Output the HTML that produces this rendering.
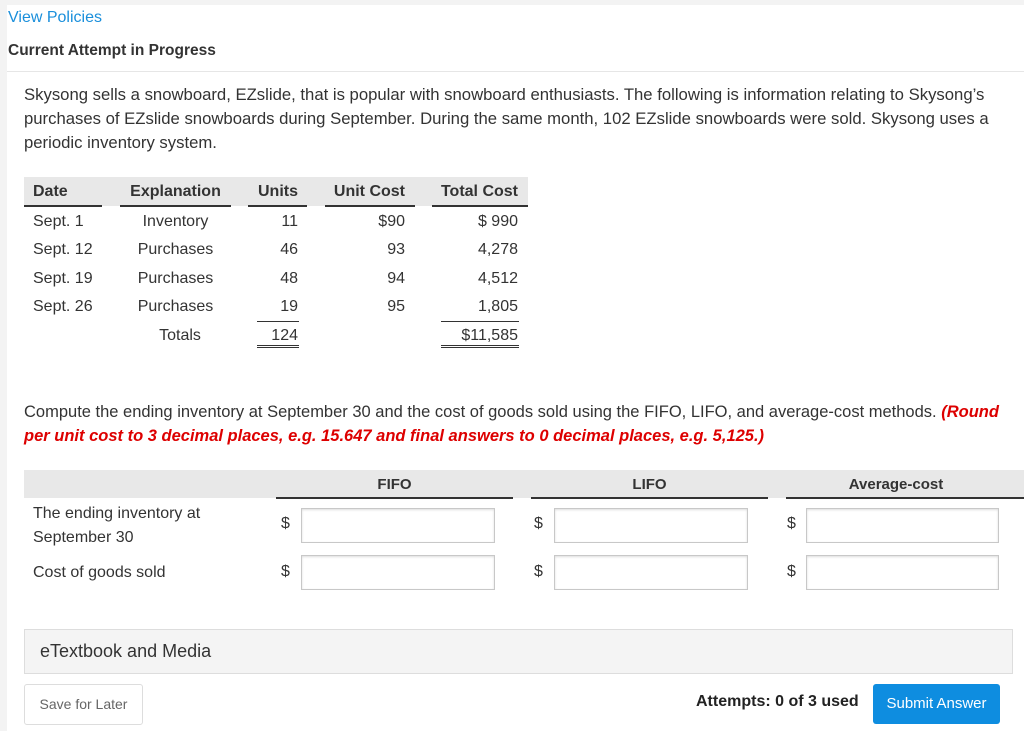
<!DOCTYPE html>
<html><head><style>
body{margin:0;background:#f3f3f3;font-family:"Liberation Sans",sans-serif;color:#333;}
.page{position:absolute;left:7px;top:5px;right:0;bottom:0;background:#fff;}
.a{position:absolute;white-space:nowrap;font-size:16px;}
.th{position:absolute;font-weight:bold;font-size:16px;white-space:nowrap;}
.ul{position:absolute;height:2px;background:#333;}
.inp{position:absolute;width:192px;height:33px;border:1px solid #c8c8c8;background:#fff;box-shadow:inset 0 1px 2px #ddd;}
</style></head><body>
<div class="page"></div>
<div class="a" style="left:8px;top:9px;color:#1a8fdb;">View Policies</div>
<div class="a" style="left:8px;top:42px;font-weight:bold;font-size:15.5px;">Current Attempt in Progress</div>
<div style="position:absolute;left:7px;right:0;top:71px;height:1px;background:#e6e6e6"></div>
<div style="position:absolute;left:24px;top:83px;width:985px;font-size:16.7px;line-height:24px;">Skysong sells a snowboard, EZslide, that is popular with snowboard enthusiasts. The following is information relating to Skysong’s purchases of EZslide snowboards during September. During the same month, 102 EZslide snowboards were sold. Skysong uses a periodic inventory system.</div>

<div style="position:absolute;left:24px;top:177px;width:504px;height:29px;background:#e8e8e8"></div>
<div class="th" style="left:33px;top:183px">Date</div>
<div class="th" style="left:120px;top:183px;width:111px;text-align:center">Explanation</div>
<div class="th" style="left:240px;top:183px;width:58px;text-align:right">Units</div>
<div class="th" style="left:300px;top:183px;width:105px;text-align:right">Unit Cost</div>
<div class="th" style="left:400px;top:183px;width:118px;text-align:right">Total Cost</div>
<div class="ul" style="left:24px;width:78px;top:205px"></div>
<div class="ul" style="left:120px;width:111px;top:205px"></div>
<div class="ul" style="left:248px;width:59px;top:205px"></div>
<div class="ul" style="left:325px;width:90px;top:205px"></div>
<div class="ul" style="left:432px;width:96px;top:205px"></div>

<div class="a" style="left:33px;top:213px">Sept. 1</div><div class="a" style="left:120px;top:213px;width:111px;text-align:center">Inventory</div><div class="a" style="left:240px;top:213px;width:58px;text-align:right">11</div><div class="a" style="left:300px;top:213px;width:105px;text-align:right">$90</div><div class="a" style="left:400px;top:213px;width:118px;text-align:right">$ 990</div>
<div class="a" style="left:33px;top:241px">Sept. 12</div><div class="a" style="left:120px;top:241px;width:111px;text-align:center">Purchases</div><div class="a" style="left:240px;top:241px;width:58px;text-align:right">46</div><div class="a" style="left:300px;top:241px;width:105px;text-align:right">93</div><div class="a" style="left:400px;top:241px;width:118px;text-align:right">4,278</div>
<div class="a" style="left:33px;top:270px">Sept. 19</div><div class="a" style="left:120px;top:270px;width:111px;text-align:center">Purchases</div><div class="a" style="left:240px;top:270px;width:58px;text-align:right">48</div><div class="a" style="left:300px;top:270px;width:105px;text-align:right">94</div><div class="a" style="left:400px;top:270px;width:118px;text-align:right">4,512</div>
<div class="a" style="left:33px;top:298px">Sept. 26</div><div class="a" style="left:120px;top:298px;width:111px;text-align:center">Purchases</div><div class="a" style="left:240px;top:298px;width:58px;text-align:right">19</div><div class="a" style="left:300px;top:298px;width:105px;text-align:right">95</div><div class="a" style="left:400px;top:298px;width:118px;text-align:right">1,805</div>
<div class="ul" style="left:257px;width:42px;top:321px;height:1px"></div>
<div class="ul" style="left:441px;width:78px;top:321px;height:1px"></div>
<div class="a" style="left:105px;top:327px;width:150px;text-align:center">Totals</div><div class="a" style="left:240px;top:327px;width:58px;text-align:right">124</div><div class="a" style="left:400px;top:327px;width:118px;text-align:right">$11,585</div>
<div style="position:absolute;left:257px;width:42px;top:345px;height:1px;border-top:1px solid #333;border-bottom:1px solid #333"></div>
<div style="position:absolute;left:441px;width:78px;top:345px;height:1px;border-top:1px solid #333;border-bottom:1px solid #333"></div>

<div style="position:absolute;left:24px;top:400px;width:990px;font-size:16.5px;line-height:24px;">Compute the ending inventory at September 30 and the cost of goods sold using the FIFO, LIFO, and average-cost methods. <i style="color:#d00;font-weight:bold">(Round per unit cost to 3 decimal places, e.g. 15.647 and final answers to 0 decimal places, e.g. 5,125.)</i></div>

<div style="position:absolute;left:24px;top:470px;right:0;height:28px;background:#e8e8e8"></div>
<div class="th" style="left:276px;width:237px;top:476px;text-align:center;font-size:15px">FIFO</div>
<div class="th" style="left:531px;width:237px;top:476px;text-align:center;font-size:15px">LIFO</div>
<div class="th" style="left:786px;width:220px;top:476px;text-align:center;font-size:15px">Average-cost</div>
<div class="ul" style="left:276px;width:237px;top:497px"></div>
<div class="ul" style="left:531px;width:237px;top:497px"></div>
<div class="ul" style="left:786px;width:238px;top:497px"></div>
<div style="position:absolute;left:33px;top:502px;font-size:16px;line-height:24px">The ending inventory at<br>September 30</div>
<div class="a" style="left:33px;top:564px">Cost of goods sold</div>
<div class="a" style="left:281px;top:515px">$</div><div class="inp" style="left:301px;top:508px"></div>
<div class="a" style="left:534px;top:515px">$</div><div class="inp" style="left:554px;top:508px"></div>
<div class="a" style="left:787px;top:515px">$</div><div class="inp" style="left:806px;top:508px;width:191px"></div>
<div class="a" style="left:281px;top:563px">$</div><div class="inp" style="left:301px;top:555px"></div>
<div class="a" style="left:534px;top:563px">$</div><div class="inp" style="left:554px;top:555px"></div>
<div class="a" style="left:787px;top:563px">$</div><div class="inp" style="left:806px;top:555px;width:191px"></div>

<div style="position:absolute;left:24px;top:629px;width:987px;height:43px;background:#f4f4f4;border:1px solid #ddd"></div>
<div class="a" style="left:40px;top:641px;font-size:18px">eTextbook and Media</div>
<div style="position:absolute;left:24px;top:684px;width:117px;height:39px;border:1px solid #ddd;border-radius:3px;background:#fff;font-size:14px;color:#666;line-height:39px;text-align:center">Save for Later</div>
<div class="a" style="left:696px;top:693px;font-weight:bold;color:#222">Attempts: 0 of 3 used</div>
<div style="position:absolute;left:873px;top:684px;width:127px;height:40px;background:#0e8de0;border-radius:3px;color:#fff;font-size:15px;line-height:40px;text-align:center">Submit Answer</div>
</body></html>
